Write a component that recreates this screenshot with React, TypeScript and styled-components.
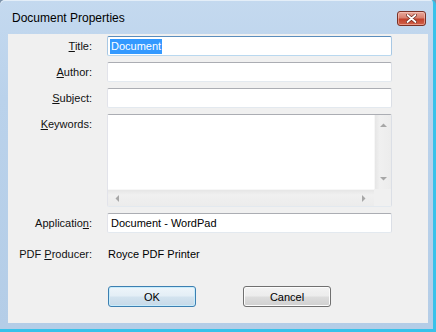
import React from "react";
import styled, { createGlobalStyle, css } from "styled-components";

const Global = createGlobalStyle`
  html, body { margin: 0; padding: 0; background: #7d93ab; }
  body { font-family: "Liberation Sans", Arial, sans-serif; }
`;

const Window = styled.div`
  width: 436px;
  height: 332px;
  box-sizing: border-box;
  background: linear-gradient(180deg, #c4d9ef 0%, #bad2eb 30%, #b4cde7 100%);
  border-right: 3px solid #38c2ea;
  border-bottom: 3px solid #38c2ea;
  border-radius: 5px 5px 0 0;
  box-shadow: inset 0 1px 0 #e4eef8;
  display: flex;
  flex-direction: column;
  padding: 0 5px 6px 8px;
`;

const TitleBar = styled.div`
  height: 34px;
  flex: none;
  display: flex;
  align-items: flex-start;
  justify-content: space-between;
  padding-left: 4px;
`;

const TitleText = styled.div`
  font-size: 12px;
  line-height: 15px;
  margin-top: 11px;
  color: #000;
`;

const CloseButton = styled.div`
  width: 29px;
  height: 15px;
  box-sizing: border-box;
  margin-top: 11px;
  margin-right: 2px;
  border: 1px solid #7a3126;
  border-radius: 3px;
  background: linear-gradient(180deg, #e9a99c 0%, #d8806f 45%, #c2412b 55%, #d1634b 100%);
  box-shadow: inset 0 0 0 1px rgba(255, 210, 200, 0.5);
  display: flex;
  align-items: center;
  justify-content: center;
`;

const Client = styled.div`
  flex: 1;
  background: #f0f0f0;
  padding-top: 2px;
  display: flex;
  flex-direction: column;
`;

const Form = styled.div`
  display: grid;
  grid-template-columns: 84px 285px;
  grid-auto-rows: auto;
  column-gap: 15px;
  row-gap: 6px;
`;

const Label = styled.div<{ $extraTop?: number }>`
  font-size: 11px;
  line-height: 20px;
  text-align: right;
  color: #111;
  white-space: nowrap;
  ${(p) => p.$extraTop && css`margin-top: ${p.$extraTop}px;`}
`;

const U = styled.span`
  text-decoration: underline;
  text-underline-offset: 1px;
`;

const Field = styled.div<{ $focused?: boolean }>`
  height: 20px;
  box-sizing: border-box;
  background: #fff;
  border: 1px solid;
  border-color: #abadb3 #dbdfe6 #e3e9ef #e2e3ea;
  border-radius: 2px;
  font-size: 11px;
  line-height: 18px;
  padding-left: 2px;
  color: #000;
  white-space: nowrap;
  ${(p) =>
    p.$focused &&
    css`
      border-color: #5a8dbd #a8c8e4 #b9d8ef #a8c8e4;
    `}
`;

const Selected = styled.span`
  background: #3399ff;
  color: #fff;
  padding: 1px 1px 2px 1px;
`;

const FieldText = styled.span`
  padding-left: 1px;
`;

const MemoBox = styled.div`
  height: 93px;
  box-sizing: border-box;
  background: #fff;
  border: 1px solid;
  border-color: #abadb3 #dbdfe6 #e3e9ef #e2e3ea;
  border-radius: 2px;
  display: grid;
  grid-template-columns: 1fr 17px;
  grid-template-rows: 1fr 17px;
`;

const MemoArea = styled.div`
  background: #fff;
`;

const ScrollBar = styled.div<{ $vertical?: boolean }>`
  display: flex;
  flex-direction: ${(p) => (p.$vertical ? "column" : "row")};
  justify-content: space-between;
  align-items: center;
  background: ${(p) =>
    p.$vertical
      ? "linear-gradient(90deg, #e6e6e6 0%, #f0f0f0 30%, #ececec 100%)"
      : "linear-gradient(180deg, #e6e6e6 0%, #f0f0f0 30%, #ececec 100%)"};
  ${(p) =>
    p.$vertical
      ? css`border-left: 1px solid #f7f7f7; padding: 2px 0;`
      : css`border-top: 1px solid #f7f7f7; padding: 0 2px 0 1px;`}
`;

const ArrowSlot = styled.div`
  width: 16px;
  height: 16px;
  display: flex;
  align-items: center;
  justify-content: center;
`;

const Corner = styled.div`
  background: #f0f0f0;
`;

const Value = styled.div`
  font-size: 11px;
  line-height: 20px;
  color: #000;
  margin-top: 5px;
  padding-left: 1px;
`;

const ButtonRow = styled.div`
  display: flex;
  gap: 47px;
  margin-top: 22px;
  padding-left: 100px;
`;

const Button = styled.button<{ $default?: boolean }>`
  width: 88px;
  height: 21px;
  box-sizing: border-box;
  padding: 0;
  font-family: "Liberation Sans", Arial, sans-serif;
  font-size: 11px;
  color: #000;
  border-radius: 3px;
  border: 1px solid #707070;
  background: linear-gradient(180deg, #f3f3f3 0%, #ececec 48%, #dddddd 52%, #d0d0d0 100%);
  box-shadow: inset 0 0 0 1px #fcfcfc;
  ${(p) =>
    p.$default &&
    css`
      border-color: #3c7fb1;
      background: linear-gradient(180deg, #eef5fa 0%, #e3eef6 48%, #d3e3ef 52%, #c6d9e8 100%);
      box-shadow: inset 0 0 0 1px #c8ecfb;
    `}
`;

const Arrow = ({ dir }: { dir: "up" | "down" | "left" | "right" }) => {
  const pts = {
    up: "0,4 3.5,0.5 7,4",
    down: "0,0 7,0 3.5,3.5",
    left: "4,0 4,7 0.5,3.5",
    right: "0,0 0,7 3.5,3.5",
  }[dir];
  const vertical = dir === "up" || dir === "down";
  return (
    <svg width={vertical ? 7 : 4} height={vertical ? 4 : 7} viewBox={vertical ? "0 0 7 4" : "0 0 4 7"}>
      <polygon points={pts} fill="#a7a7a7" />
    </svg>
  );
};

const CloseGlyph = () => (
  <svg width="11" height="9" viewBox="0 0 11 9">
    <path d="M1.5 1 L9.5 8 M9.5 1 L1.5 8" stroke="#6a2418" strokeWidth="3.2" strokeLinecap="round" />
    <path d="M1.5 1 L9.5 8 M9.5 1 L1.5 8" stroke="#ffffff" strokeWidth="1.8" strokeLinecap="round" />
  </svg>
);

export default function App() {
  return (
    <>
      <Global />
      <Window>
        <TitleBar>
          <TitleText>Document Properties</TitleText>
          <CloseButton>
            <CloseGlyph />
          </CloseButton>
        </TitleBar>
        <Client>
          <Form>
            <Label>
              <U>T</U>itle:
            </Label>
            <Field $focused>
              <Selected>Document</Selected>
            </Field>

            <Label>
              <U>A</U>uthor:
            </Label>
            <Field />

            <Label>
              <U>S</U>ubject:
            </Label>
            <Field />

            <Label>
              <U>K</U>eywords:
            </Label>
            <MemoBox>
              <MemoArea />
              <ScrollBar $vertical>
                <ArrowSlot>
                  <Arrow dir="up" />
                </ArrowSlot>
                <ArrowSlot>
                  <Arrow dir="down" />
                </ArrowSlot>
              </ScrollBar>
              <ScrollBar>
                <ArrowSlot>
                  <Arrow dir="left" />
                </ArrowSlot>
                <ArrowSlot>
                  <Arrow dir="right" />
                </ArrowSlot>
              </ScrollBar>
              <Corner />
            </MemoBox>

            <Label>
              Applicatio<U>n</U>:
            </Label>
            <Field>
              <FieldText>Document - WordPad</FieldText>
            </Field>

            <Label $extraTop={5}>
              PDF <U>P</U>roducer:
            </Label>
            <Value>Royce PDF Printer</Value>
          </Form>
          <ButtonRow>
            <Button $default>OK</Button>
            <Button>Cancel</Button>
          </ButtonRow>
        </Client>
      </Window>
    </>
  );
}
